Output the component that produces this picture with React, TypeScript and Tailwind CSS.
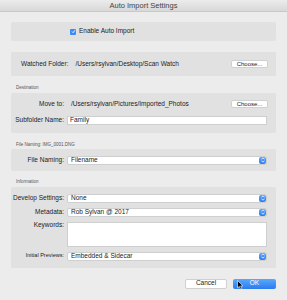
import React from "react";

const font = { fontFamily: '"Liberation Sans", Arial, sans-serif' };

function Stepper() {
  return (
    <span className="flex h-full w-[7px] flex-col items-center justify-center rounded-[2px] bg-gradient-to-b from-[#5aa6fb] to-[#2f7ef0]">
      <svg width="4" height="6" viewBox="0 0 4 6">
        <path d="M0.5 2.3 L2 0.8 L3.5 2.3 M0.5 3.7 L2 5.2 L3.5 3.7" stroke="white" strokeWidth="0.8" fill="none" />
      </svg>
    </span>
  );
}

function Select({ value }: { value: string }) {
  return (
    <div className="flex h-[9px] w-[200px] items-center rounded-[2px] border border-[#cfcfcf] bg-white pl-[3px]">
      <span className="flex-1 text-[6.5px] leading-none text-[#222]">{value}</span>
      <Stepper />
    </div>
  );
}

function Button({ children }: { children: React.ReactNode }) {
  return (
    <div className="flex h-[8px] w-[37px] items-center justify-center rounded-[2px] border border-[#d0d0d0] bg-white text-[6px] leading-none text-[#222]">
      {children}
    </div>
  );
}

function Label({ children }: { children: React.ReactNode }) {
  return <div className="w-[56px] shrink-0 pr-[3px] text-right text-[6.5px] leading-none text-[#222]">{children}</div>;
}

function GroupTitle({ children }: { children: React.ReactNode }) {
  return <div className="pl-[5px] text-[4.5px] leading-none text-[#555]">{children}</div>;
}

export default function App() {
  return (
    <div className="relative h-[300px] w-[287px] overflow-hidden bg-[#ececec]" style={font}>
      <div className="flex h-[12px] items-center justify-center border-b border-[#c8c8c8] bg-gradient-to-b from-[#ececec] to-[#d8d8d8] text-[7.5px] text-[#444]">
        Auto Import Settings
      </div>

      <div className="flex flex-col px-[11px]">
        <div className="mt-[10px] flex h-[19px] items-center rounded-[2px] bg-[#e1e1e1] pl-[59px]">
          <span className="flex h-[6px] w-[6px] items-center justify-center rounded-[1px] bg-[#3a8bf5]">
            <svg width="5" height="5" viewBox="0 0 5 5">
              <path d="M1 2.6 L2.1 3.7 L4 1.2" stroke="white" strokeWidth="0.9" fill="none" />
            </svg>
          </span>
          <span className="ml-[3px] text-[6.5px] leading-none text-[#222]">Enable Auto Import</span>
        </div>

        <div className="mt-[11px] flex h-[24px] items-center rounded-[2px] bg-[#e1e1e1] pl-[10px] pr-[8px]">
          <span className="text-[6.5px] leading-none text-[#222]">Watched Folder:</span>
          <span className="ml-[7px] flex-1 text-[6.5px] leading-none text-[#222]">/Users/rsylvan/Desktop/Scan Watch</span>
          <Button>Choose...</Button>
        </div>

        <div className="mt-[10px]">
          <GroupTitle>Destination</GroupTitle>
        </div>
        <div className="mt-[2px] flex h-[40px] flex-col justify-center gap-[8px] rounded-[2px] bg-[#e1e1e1]">
          <div className="flex items-center pr-[8px]">
            <Label>Move to:</Label>
            <span className="ml-[4px] flex-1 text-[6.5px] leading-none text-[#222]">/Users/rsylvan/Pictures/Imported_Photos</span>
            <Button>Choose...</Button>
          </div>
          <div className="flex items-center">
            <Label>Subfolder Name:</Label>
            <div className="flex h-[9px] w-[200px] items-center border border-[#cfcfcf] bg-white pl-[2px] text-[6.5px] leading-none text-[#222]">
              Family
            </div>
          </div>
        </div>

        <div className="mt-[10px]">
          <GroupTitle>File Naming: IMG_0001.DNG</GroupTitle>
        </div>
        <div className="mt-[2px] flex h-[22px] items-center rounded-[2px] bg-[#e1e1e1]">
          <Label>File Naming:</Label>
          <Select value="Filename" />
        </div>

        <div className="mt-[9px]">
          <GroupTitle>Information</GroupTitle>
        </div>
        <div className="mt-[2px] flex h-[81px] flex-col justify-center gap-[5px] rounded-[2px] bg-[#e1e1e1]">
          <div className="flex items-center">
            <Label>Develop Settings:</Label>
            <Select value="None" />
          </div>
          <div className="flex items-center">
            <Label>Metadata:</Label>
            <Select value="Rob Sylvan @ 2017" />
          </div>
          <div className="flex items-start">
            <Label>Keywords:</Label>
            <div className="h-[25px] w-[200px] border border-[#cfcfcf] bg-white" />
          </div>
          <div className="flex items-center">
            <div className="w-[56px] shrink-0 pr-[3px] text-right text-[5.5px] leading-none text-[#222]">Initial Previews:</div>
            <Select value="Embedded & Sidecar" />
          </div>
        </div>

        <div className="mt-[11px] flex justify-end gap-[6px]">
          <div className="flex h-[10px] w-[42px] items-center justify-center rounded-[2px] border border-[#d0d0d0] bg-white text-[6.5px] leading-none text-[#222]">
            Cancel
          </div>
          <div className="flex h-[10px] w-[43px] items-center justify-center rounded-[2px] bg-gradient-to-b from-[#5ba8fb] to-[#2a7bee] text-[6.5px] leading-none text-white">
            OK
          </div>
        </div>
      </div>

      <svg className="absolute left-[237px] top-[280px]" width="7" height="10" viewBox="0 0 7 10">
        <path d="M0.5 0.5 L0.5 8 L2.3 6.3 L3.6 9.2 L4.8 8.7 L3.6 5.9 L6 5.9 Z" fill="black" stroke="white" strokeWidth="0.6" />
      </svg>
    </div>
  );
}
